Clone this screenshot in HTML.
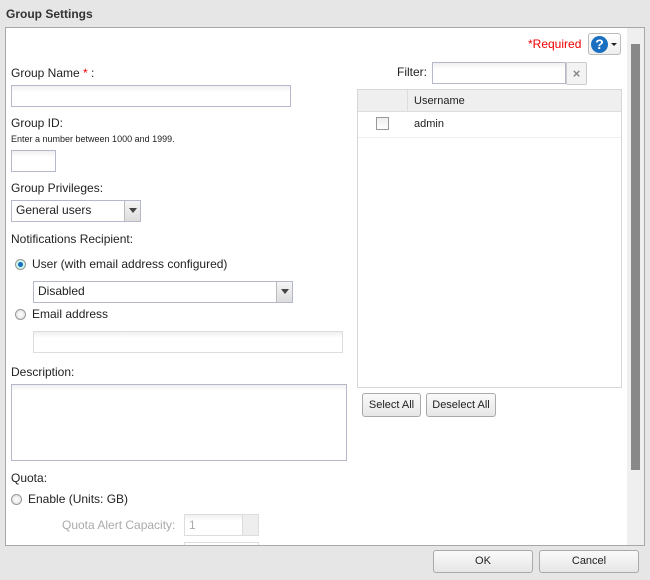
<!DOCTYPE html>
<html><head><style>
*{box-sizing:border-box;margin:0;padding:0}
body{width:650px;height:580px;background:#e6e6e6;font-family:"Liberation Sans",sans-serif;font-size:12px;color:#222;position:relative;overflow:hidden}
.a{position:absolute}
.t{position:absolute;white-space:nowrap;line-height:14px}
.inp{position:absolute;border:1px solid #b4b8c8;background:linear-gradient(#f0f0f0,#fff 6px)}
.sel{position:absolute;border:1px solid #b4b8c8;background:#fff;padding-left:4px;line-height:19px}
.sel .ar{position:absolute;right:0;top:0;bottom:0;width:16px;background:linear-gradient(#f5f5f5,#ddd);border-left:1px solid #bbb}
.sel .ar:after{content:"";position:absolute;left:4px;top:7px;border:4px solid transparent;border-top:5px solid #444;border-bottom:0}
.rad{position:absolute;width:11px;height:11px;border-radius:50%;border:1px solid #999;background:radial-gradient(#fff,#ddd)}
.btn{position:absolute;border:1px solid #aaa;border-radius:3px;background:linear-gradient(#fafafa,#e6e6e6);text-align:center;font-size:11px}
</style></head><body>
<div class="t" style="left:6px;top:7px;font-weight:bold;color:#333">Group Settings</div>
<div class="a" style="left:5px;top:27px;width:640px;height:519px;background:#fff;border:1px solid #a8a8a8"></div>
<div class="a" style="left:627px;top:28px;width:17px;height:517px;background:#efefef"></div>
<div class="a" style="left:631px;top:44px;width:9px;height:426px;background:#888"></div>

<div class="t" style="left:528px;top:37px;color:#e00">*Required</div>
<div class="a" style="left:588px;top:33px;width:33px;height:22px;border:1px solid #bbb;border-radius:3px;background:linear-gradient(#fff,#eee)"></div>
<div class="a" style="left:591px;top:36px;width:17px;height:17px;border-radius:50%;background:#1a6fc0;color:#fff;font-weight:bold;font-size:14px;text-align:center;line-height:17px">?</div>
<div class="a" style="left:611px;top:43px;border:3px solid transparent;border-top:3px solid #222;border-bottom:0"></div>

<div class="t" style="left:397px;top:65px">Filter:</div>
<div class="inp" style="left:432px;top:62px;width:134px;height:22px"></div>
<div class="a" style="left:566px;top:62px;width:21px;height:23px;border:1px solid #ccc;border-radius:2px;background:#f3f3f3;color:#888;text-align:center;line-height:21px;font-size:13px;font-weight:bold">×</div>

<div class="a" style="left:357px;top:89px;width:265px;height:299px;border:1px solid #d6d6d6;background:#fff"></div>
<div class="a" style="left:358px;top:90px;width:263px;height:22px;background:#efefef;border-bottom:1px solid #ddd"></div>
<div class="a" style="left:407px;top:90px;width:1px;height:22px;background:#ddd"></div>
<div class="t" style="left:414px;top:94px;font-size:11px">Username</div>
<div class="a" style="left:376px;top:117px;width:13px;height:13px;border:1px solid #999;background:linear-gradient(#eee,#fff)"></div>
<div class="t" style="left:414px;top:117px;font-size:11px">admin</div>
<div class="a" style="left:358px;top:137px;width:263px;height:1px;background:#eee"></div>
<div class="btn" style="left:362px;top:393px;width:59px;height:24px;line-height:22px">Select All</div>
<div class="btn" style="left:426px;top:393px;width:70px;height:24px;line-height:22px">Deselect All</div>

<div class="t" style="left:11px;top:66px">Group Name <span style="color:#e00">*</span> :</div>
<div class="inp" style="left:11px;top:85px;width:280px;height:22px"></div>
<div class="t" style="left:11px;top:116px">Group ID:</div>
<div class="t" style="left:11px;top:132px;font-size:9px">Enter a number between 1000 and 1999.</div>
<div class="inp" style="left:11px;top:150px;width:45px;height:22px"></div>
<div class="t" style="left:11px;top:181px">Group Privileges:</div>
<div class="sel" style="left:11px;top:200px;width:130px;height:22px">General users<div class="ar"></div></div>
<div class="t" style="left:11px;top:232px">Notifications Recipient:</div>
<div class="rad" style="left:15px;top:259px;background:radial-gradient(#1a6fc0 35%,#cfe 45%,#ddd)"></div>
<div class="t" style="left:32px;top:257px">User (with email address configured)</div>
<div class="sel" style="left:33px;top:281px;width:260px;height:22px">Disabled<div class="ar"></div></div>
<div class="rad" style="left:15px;top:309px"></div>
<div class="t" style="left:32px;top:307px">Email address</div>
<div class="inp" style="left:33px;top:331px;width:310px;height:22px;border-color:#ddd"></div>
<div class="t" style="left:11px;top:365px">Description:</div>
<div class="inp" style="left:11px;top:384px;width:336px;height:77px"></div>
<div class="t" style="left:11px;top:471px">Quota:</div>
<div class="rad" style="left:11px;top:494px"></div>
<div class="t" style="left:28px;top:492px">Enable (Units: GB)</div>
<div class="t" style="left:62px;top:518px;color:#aaa">Quota Alert Capacity:</div>
<div class="inp" style="left:184px;top:514px;width:60px;height:22px;border-color:#ddd;color:#aaa;padding:3px 4px;line-height:14px">1</div>
<div class="a" style="left:242px;top:514px;width:17px;height:22px;background:#eee;border:1px solid #ddd"></div>
<div class="a" style="left:184px;top:542px;width:75px;height:3px;border:1px solid #ddd;border-bottom:0"></div>

<div class="btn" style="left:433px;top:550px;width:100px;height:23px;line-height:21px">OK</div>
<div class="btn" style="left:539px;top:550px;width:100px;height:23px;line-height:21px">Cancel</div>
</body></html>
